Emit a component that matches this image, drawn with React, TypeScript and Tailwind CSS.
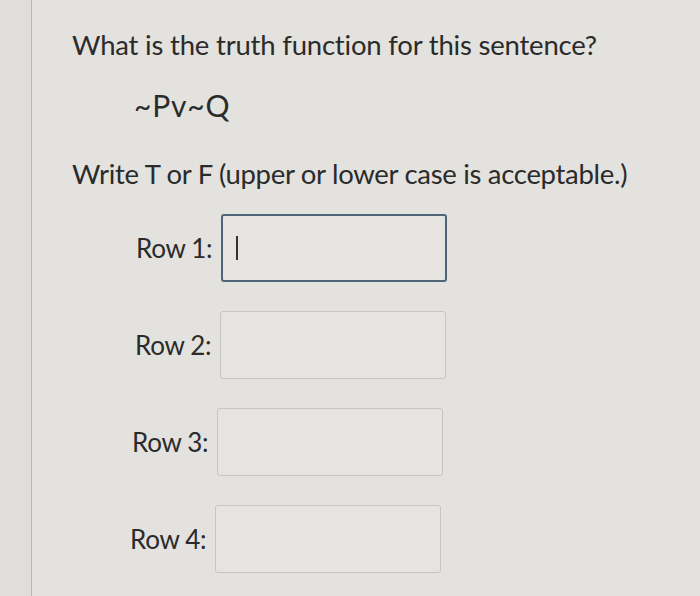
const rows = [
  { label: "Row 1:", focused: true, ml: "ml-[104px]" },
  { label: "Row 2:", focused: false, ml: "ml-[103px]" },
  { label: "Row 3:", focused: false, ml: "ml-[100px]" },
  { label: "Row 4:", focused: false, ml: "ml-[98px]" },
];

export default function App() {
  return (
    <div className="w-[700px] h-[596px] overflow-hidden bg-[#e3e2df] flex font-['Lato','Liberation_Sans',sans-serif] text-[#2b2b2b]">
      {/* left gutter */}
      <div className="w-[32px] shrink-0 bg-[#dfdedb] border-r border-[#b9b8b5]" />

      <div className="flex-1 flex flex-col">
        <h1 className="ml-[40px] mt-[26px] text-[27.5px] leading-[38px] tracking-[-0.2px]">
          What is the truth function for this sentence?
        </h1>
        <div className="ml-[102px] mt-[22px] text-[30px] leading-[38px] tracking-[0.8px]">~Pv~Q</div>
        <p className="ml-[40px] mt-[31px] text-[27.5px] leading-[38px] tracking-[-0.3px]">
          Write T or F (upper or lower case is acceptable.)
        </p>

        <div className="flex flex-col mt-[21px] gap-[29px]">
          {rows.map((r) => (
            <div key={r.label} className={`flex items-center gap-[9px] ${r.ml}`}>
              <span className="text-[26px] leading-[32px] tracking-[-0.3px]">{r.label}</span>
              <div
                className={`w-[226px] h-[68px] rounded-[3px] flex items-center bg-[#e5e4e1] ${
                  r.focused ? "border-2 border-[#4d6577]" : "border border-[#c6c5c2]"
                }`}
              >
                {r.focused && <div className="ml-[13px] w-[2px] h-[24px] bg-[#333]" />}
              </div>
            </div>
          ))}
        </div>
      </div>
    </div>
  );
}
